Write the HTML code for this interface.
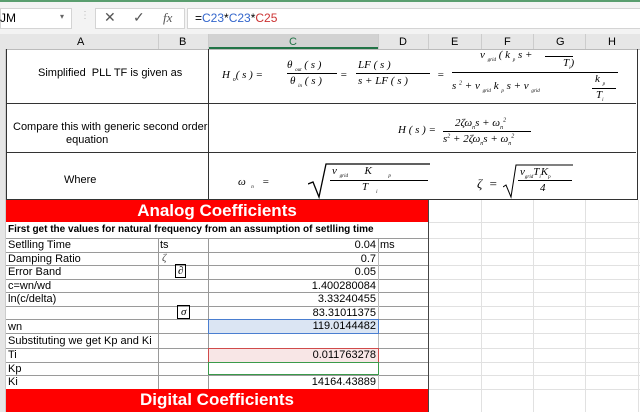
<!DOCTYPE html><html><head><style>
body{margin:0;width:640px;height:412px;overflow:hidden;background:#fff;font-family:"Liberation Sans",sans-serif;position:relative}
.a{position:absolute}
.t{font-size:11px;color:#000;white-space:nowrap}
.v{position:absolute;left:208px;width:168px;text-align:right;font-size:11px;white-space:nowrap}
.m{font-family:"Liberation Serif",serif;font-style:italic;font-size:11px;white-space:nowrap}
.hl{position:absolute;height:1px;background:#9a9a9a}
.gl{position:absolute;width:1px;background:#e1e1e1}
.gh{position:absolute;height:1px;background:#e1e1e1}
</style></head><body>
<div class="a" style="left:0;top:0;width:640px;height:34px;background:#f3f3f3"></div>
<div class="a" style="left:0;top:0;width:640px;height:2px;background:#5a9e6f"></div>
<div class="a" style="left:0;top:8px;width:70px;height:19px;background:#fff;border:1px solid #d4d4d4"></div>
<div class="a t" style="left:0;top:11px;font-size:12px">JM</div>
<div class="a" style="left:60px;top:12px;font-size:8px;color:#666">▾</div>
<div class="a" style="left:80px;top:10px;color:#bbb;font-size:10px">⋮</div>
<div class="a" style="left:95px;top:8px;width:88px;height:19px;background:#fff;border:1px solid #d4d4d4"></div>
<div class="a" style="left:104px;top:9px;font-size:14px;color:#555">✕</div>
<div class="a" style="left:133px;top:9px;font-size:14px;color:#555">✓</div>
<div class="a m" style="left:163px;top:10px;font-size:13px;color:#555">fx</div>
<div class="a" style="left:187px;top:8px;width:453px;height:19px;background:#fff;border:1px solid #d4d4d4"></div>
<div class="a t" style="left:195px;top:11px;font-size:12px">=<span style="color:#3366cc">C23</span>*<span style="color:#3366cc">C23</span>*<span style="color:#cc3333">C25</span></div>
<div class="a" style="left:0;top:34px;width:640px;height:15px;background:#e6e6e6;border-bottom:1px solid #bbb"></div>
<div class="a" style="left:208px;top:34px;width:170px;height:13px;background:#d2d2d2;border-bottom:2px solid #217346"></div>
<div class="a t" style="left:77px;top:36px">A</div>
<div class="a t" style="left:179px;top:36px">B</div>
<div class="a t" style="left:289px;top:36px;color:#217346">C</div>
<div class="a t" style="left:399px;top:36px">D</div>
<div class="a t" style="left:451px;top:36px">E</div>
<div class="a t" style="left:504px;top:36px">F</div>
<div class="a t" style="left:556px;top:36px">G</div>
<div class="a t" style="left:608px;top:36px">H</div>
<div class="gl" style="left:158px;top:34px;height:15px;background:#ccc"></div>
<div class="gl" style="left:208px;top:34px;height:15px;background:#ccc"></div>
<div class="gl" style="left:378px;top:34px;height:15px;background:#ccc"></div>
<div class="gl" style="left:428px;top:34px;height:15px;background:#ccc"></div>
<div class="gl" style="left:481px;top:34px;height:15px;background:#ccc"></div>
<div class="gl" style="left:533px;top:34px;height:15px;background:#ccc"></div>
<div class="gl" style="left:585px;top:34px;height:15px;background:#ccc"></div>
<div class="a" style="left:0;top:49px;width:5px;height:363px;background:#e6e6e6;border-right:1px solid #ccc"></div>
<div class="a" style="left:6px;top:49px;width:630px;height:150px;border:1px solid #333;border-top:none"></div>
<div class="a" style="left:6px;top:103px;width:630px;height:1px;background:#333"></div>
<div class="a" style="left:6px;top:152px;width:630px;height:1px;background:#333"></div>
<div class="a" style="left:208px;top:49px;width:1px;height:150px;background:#333"></div>
<div class="a t" style="left:38px;top:67px">Simplified&nbsp; PLL TF is given as</div>
<div class="a t" style="left:13px;top:121px">Compare this with generic second order</div>
<div class="a t" style="left:66px;top:134px">equation</div>
<div class="a t" style="left:64px;top:174px">Where</div>
<div class="a m" style="left:222px;top:69px">H <sub style="font-size:6px">o</sub>( s ) =</div>
<div class="a m" style="left:287px;top:59px">θ <sub style="font-size:5px">out</sub> ( s )</div>
<div class="a" style="left:287px;top:73px;width:50px;height:1px;background:#000"></div>
<div class="a m" style="left:290px;top:75px">θ <sub style="font-size:5px">in</sub> ( s )</div>
<div class="a m" style="left:340px;top:69px">=</div>
<div class="a m" style="left:358px;top:59px">LF ( s )</div>
<div class="a" style="left:356px;top:73px;width:74px;height:1px;background:#000"></div>
<div class="a m" style="left:358px;top:75px">s + LF ( s )</div>
<div class="a m" style="left:437px;top:69px">=</div>
<div class="a m" style="left:480px;top:49px">v <sub style="font-size:5px">grid</sub> ( k <sub style="font-size:5px">p</sub> s + </div>
<div class="a m" style="left:563px;top:57px">T<sub style="font-size:5px">i</sub>)</div>
<div class="a" style="left:545px;top:56px;width:28px;height:1px;background:#000"></div>
<div class="a" style="left:452px;top:72px;width:166px;height:1px;background:#000"></div>
<div class="a m" style="left:452px;top:80px">s <sup style="font-size:6px">2</sup> + v <sub style="font-size:5px">grid</sub> k <sub style="font-size:5px">p</sub> s + v <sub style="font-size:5px">grid</sub></div>
<div class="a m" style="left:595px;top:73px">k <sub style="font-size:5px">p</sub></div>
<div class="a" style="left:592px;top:88px;width:24px;height:1px;background:#000"></div>
<div class="a m" style="left:596px;top:89px">T<sub style="font-size:5px">i</sub></div>
<div class="a m" style="left:398px;top:124px">H ( s ) =</div>
<div class="a m" style="left:455px;top:117px">2ζω<sub style="font-size:6px">n</sub>s + ω<sub style="font-size:6px">n</sub><sup style="font-size:6px">2</sup></div>
<div class="a" style="left:443px;top:131px;width:88px;height:1px;background:#000"></div>
<div class="a m" style="left:443px;top:133px">s<sup style="font-size:6px">2</sup> + 2ζω<sub style="font-size:6px">n</sub>s + ω<sub style="font-size:6px">n</sub><sup style="font-size:6px">2</sup></div>
<div class="a m" style="left:238px;top:176px">ω &nbsp;<sub style="font-size:5px">n</sub> &nbsp; =</div>
<svg class="a" style="left:308px;top:162px" width="124" height="38"><polyline points="0,22 5,20 11,35 18,2 122,2" fill="none" stroke="#000" stroke-width="1.3"/></svg>
<div class="a m" style="left:332px;top:165px">v <sub style="font-size:5px">grid</sub> &nbsp;&nbsp;&nbsp;&nbsp;&nbsp;K &nbsp;&nbsp;&nbsp;&nbsp;&nbsp;<sub style="font-size:5px">p</sub></div>
<div class="a" style="left:330px;top:180px;width:98px;height:1px;background:#000"></div>
<div class="a m" style="left:362px;top:181px">T &nbsp;&nbsp;<sub style="font-size:5px">i</sub></div>
<div class="a m" style="left:477px;top:176px;font-size:13px">ζ &nbsp;=</div>
<svg class="a" style="left:503px;top:163px" width="72" height="36"><polyline points="0,24 3,22 8,34 13,2 70,2" fill="none" stroke="#000" stroke-width="1"/></svg>
<div class="a m" style="left:520px;top:166px">v<sub style="font-size:5px">grid</sub>T<sub style="font-size:5px">i</sub>K<sub style="font-size:5px">p</sub></div>
<div class="a" style="left:518px;top:180px;width:54px;height:1px;background:#000"></div>
<div class="a m" style="left:540px;top:182px">4</div>
<div class="gl" style="left:481px;top:200px;height:212px"></div>
<div class="gl" style="left:533px;top:200px;height:212px"></div>
<div class="gl" style="left:585px;top:200px;height:212px"></div>
<div class="gl" style="left:638px;top:200px;height:212px"></div>
<div class="gh" style="left:429px;top:222px;width:211px"></div>
<div class="gh" style="left:429px;top:238px;width:211px"></div>
<div class="gh" style="left:429px;top:252px;width:211px"></div>
<div class="gh" style="left:429px;top:265px;width:211px"></div>
<div class="gh" style="left:429px;top:279px;width:211px"></div>
<div class="gh" style="left:429px;top:292px;width:211px"></div>
<div class="gh" style="left:429px;top:306px;width:211px"></div>
<div class="gh" style="left:429px;top:319px;width:211px"></div>
<div class="gh" style="left:429px;top:333px;width:211px"></div>
<div class="gh" style="left:429px;top:348px;width:211px"></div>
<div class="gh" style="left:429px;top:362px;width:211px"></div>
<div class="gh" style="left:429px;top:375px;width:211px"></div>
<div class="gh" style="left:429px;top:389px;width:211px"></div>
<div class="a" style="left:6px;top:200px;width:422px;height:22px;background:#f00"></div>
<div class="a" style="left:6px;top:201px;width:422px;text-align:center;color:#fff;font-weight:bold;font-size:17px">Analog Coefficients</div>
<div class="a t" style="left:8px;top:224px;font-weight:bold;font-size:10px">First get the values for natural frequency from an assumption of setlling time</div>
<div class="a" style="left:428px;top:200px;width:1px;height:212px;background:#444"></div>
<div class="a" style="left:158px;top:238px;width:1px;height:151px;background:#999"></div>
<div class="a" style="left:208px;top:238px;width:1px;height:151px;background:#999"></div>
<div class="a" style="left:378px;top:238px;width:1px;height:14px;background:#999"></div>
<div class="hl" style="left:6px;top:238px;width:422px"></div>
<div class="hl" style="left:6px;top:252px;width:422px"></div>
<div class="hl" style="left:6px;top:265px;width:422px"></div>
<div class="hl" style="left:6px;top:279px;width:422px"></div>
<div class="hl" style="left:6px;top:292px;width:422px"></div>
<div class="hl" style="left:6px;top:306px;width:422px"></div>
<div class="hl" style="left:6px;top:319px;width:422px"></div>
<div class="hl" style="left:6px;top:333px;width:422px"></div>
<div class="hl" style="left:6px;top:348px;width:422px"></div>
<div class="hl" style="left:6px;top:362px;width:422px"></div>
<div class="hl" style="left:6px;top:375px;width:422px"></div>
<div class="gl" style="left:378px;top:252px;height:137px;background:#bbb"></div>
<div class="a" style="left:208px;top:319px;width:169px;height:13px;background:#dbe5f3;border:1px solid #4a7ed0"></div>
<div class="a" style="left:208px;top:348px;width:169px;height:13px;background:#f8e6e6;border:1px solid #d04a4a;border-bottom-color:#3a9a4a"></div>
<div class="a" style="left:208px;top:362px;width:169px;height:12px;border:1px solid #3a9a4a;border-top:none"></div>
<div class="a t" style="left:8px;top:239px">Setlling Time</div><div class="a t" style="left:160px;top:239px">ts</div><div class="v" style="top:239px">0.04</div><div class="a t" style="left:380px;top:239px">ms</div>
<div class="a t" style="left:8px;top:253px">Damping Ratio</div><div class="a m" style="left:162px;top:252px;color:#555">ζ</div><div class="v" style="top:253px">0.7</div>
<div class="a t" style="left:8px;top:266px">Error Band</div><div class="a m" style="left:175px;top:264px;border:1px solid #000;padding:0 2px;line-height:12px">∂</div><div class="v" style="top:266px">0.05</div>
<div class="a t" style="left:8px;top:280px">c=wn/wd</div><div class="v" style="top:280px">1.400280084</div>
<div class="a t" style="left:8px;top:293px">ln(c/delta)</div><div class="v" style="top:293px">3.33240455</div>
<div class="a m" style="left:177px;top:305px;border:1px solid #000;padding:0 3px;line-height:12px">σ</div><div class="v" style="top:307px">83.31011375</div>
<div class="a t" style="left:8px;top:321px">wn</div><div class="v" style="top:320px">119.0144482</div>
<div class="a t" style="left:8px;top:335px">Substituting we get Kp and Ki</div>
<div class="a t" style="left:8px;top:349px">Ti</div><div class="v" style="top:349px">0.011763278</div>
<div class="a t" style="left:8px;top:363px">Kp</div>
<div class="a t" style="left:8px;top:376px">Ki</div><div class="v" style="top:376px">14164.43889</div>
<div class="a" style="left:6px;top:389px;width:422px;height:23px;background:#f00"></div>
<div class="a" style="left:6px;top:390px;width:422px;text-align:center;color:#fff;font-weight:bold;font-size:17px">Digital Coefficients</div>
</body></html>
